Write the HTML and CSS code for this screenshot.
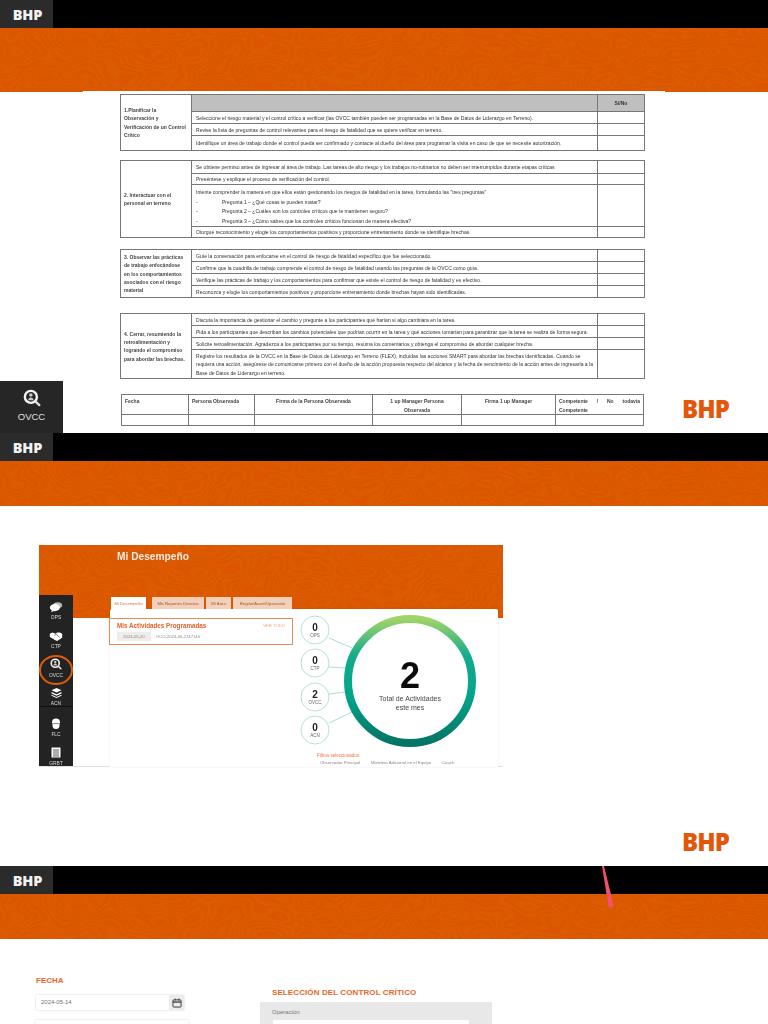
FILE: index.html
```html
<!DOCTYPE html>
<html lang="es">
<head>
  <meta charset="UTF-8">
  <meta name="viewport" content="width=device-width, initial-scale=1.0">
  <title>OVCC - Observación y Verificación de un Control Crítico</title>
  <link rel="stylesheet" href="styles.css">
</head>
<body>
  <!-- shared defs: banner texture and icons -->
  <svg class="defs" width="0" height="0" aria-hidden="true">
    <defs>
      <filter id="topo" x="0" y="0" width="100%" height="100%">
        <feTurbulence type="fractalNoise" baseFrequency="0.016 0.03" numOctaves="2" seed="11"/>
        <feColorMatrix type="matrix" values="0 0 0 0 0.62  0 0 0 0 0.2  0 0 0 0 0  1.6 0 0 0 -0.3"/>
        <feComponentTransfer>
          <feFuncA type="discrete" tableValues="0 .15 0 .15 0 .15 0 .15 0 .15 0 .15 0 .15 0 .15 0 .15 0 .15 0"/>
        </feComponentTransfer>
        <feGaussianBlur stdDeviation="0.5"/>
      </filter>
      <symbol id="ico-ovcc" viewBox="0 0 24 24">
        <circle cx="10.5" cy="10.5" r="8" fill="none" stroke="#f4f4f4" stroke-width="3.2"/>
        <circle cx="10.5" cy="8" r="2.400" fill="#c9c9c9"/>
        <path d="M6.800 15c.4-2.800 1.800-3.800 3.700-3.800s3.300 1 3.700 3.800z" fill="#c9c9c9"/>
        <path d="M16.800 16.800l5 4.700" stroke="#e8e0d4" stroke-width="3" stroke-linecap="round"/>
      </symbol>
    </defs>
  </svg>

  <section class="slide">
    <header class="topbar"><div class="logo-box">BHP</div></header>
    <div class="banner banner-tall"><svg class="topo"><rect width="100%" height="100%" filter="url(#topo)"/></svg></div>

    <div class="doc">
      <table class="check check-1">
        <tr class="head">
          <th rowspan="4" class="step">1.Planificar la<br>Observación y<br>Verificación de un Control<br>Crítico</th>
          <td class="grey"></td><td class="grey yesno">Sí/No</td>
        </tr>
        <tr class="r12"><td>Seleccione el riesgo material y el control crítico a verificar (las OVCC también pueden ser programadas en la Base de Datos de Liderazgo en Terreno).</td><td></td></tr>
        <tr class="r12"><td>Revise la lista de preguntas de control relevantes para el riesgo de fatalidad que se quiere verificar en terreno.</td><td></td></tr>
        <tr class="r15"><td>Identifique un área de trabajo donde el control pueda ser confirmado y contacte al dueño del área para programar la visita en caso de que se necesite autorización.</td><td></td></tr>
      </table>

      <table class="check check-2">
        <tr class="r13">
          <th rowspan="4" class="step">2. Interactuar con el<br>personal en terreno</th>
          <td>Se obtiene permiso antes de ingresar al área de trabajo. Las tareas de alto riesgo y los trabajos no-rutinarios no deben ser interrumpidos durante etapas críticas</td><td></td>
        </tr>
        <tr class="r11"><td>Preséntese y explique el proceso de verificación del control.</td><td></td></tr>
        <tr class="r42">
          <td class="questions">
            <p>Intente comprender la manera en que ellos están gestionando los riesgos de fatalidad en la tarea, formulando las "tres preguntas"</p>
            <p class="ask"><span>-</span>Pregunta 1 – ¿Qué cosas te pueden matar?</p>
            <p class="ask"><span>-</span>Pregunta 2 – ¿Cuáles son los controles críticos que te mantienen seguro?</p>
            <p class="ask"><span>-</span>Pregunta 3 – ¿Cómo sabes que los controles críticos funcionan de manera efectiva?</p>
          </td><td></td>
        </tr>
        <tr class="r11"><td>Otorgue reconocimiento y elogie los comportamientos positivos y proporcione entrenamiento donde se identifique brechas.</td><td></td></tr>
      </table>

      <table class="check check-3">
        <tr class="r12">
          <th rowspan="4" class="step">3. Observar las prácticas<br>de trabajo enfocándose<br>en los comportamientos<br>asociados con el riesgo<br>material</th>
          <td>Guíe la conversación para enfocarse en el control de riesgo de fatalidad específico que fue seleccionado.</td><td></td>
        </tr>
        <tr class="r12"><td>Confirme que la cuadrilla de trabajo comprende el control de riesgo de fatalidad usando las preguntas de la OVCC como guía.</td><td></td></tr>
        <tr class="r12"><td>Verifique las prácticas de trabajo y los comportamientos para confirmar que existe el control de riesgo de fatalidad y es efectivo.</td><td></td></tr>
        <tr class="r12"><td>Reconozca y elogie los comportamientos positivos y proporcione entrenamiento donde brechas hayan sido identificadas.</td><td></td></tr>
      </table>

      <table class="check check-4">
        <tr class="r12">
          <th rowspan="4" class="step">4. Cerrar, resumiendo la<br>retroalimentación y<br>logrando el compromiso<br>para abordar las brechas.</th>
          <td>Discuta la importancia de gestionar el cambio y pregunte a los participantes qué harían si algo cambiara en la tarea.</td><td></td>
        </tr>
        <tr class="r12"><td>Pida a los participantes que describan los cambios potenciales que podrían ocurrir en la tarea y qué acciones tomarían para garantizar que la tarea se realiza de forma segura.</td><td></td></tr>
        <tr class="r12"><td>Solicite retroalimentación. Agradezca a los participantes por su tiempo, resuma los comentarios y obtenga el compromiso de abordar cualquier brecha.</td><td></td></tr>
        <tr class="r29"><td class="tall">Registre los resultados de la OVCC en la Base de Datos de Liderazgo en Terreno (FLEX), incluidas las acciones SMART para abordar las brechas identificadas. Cuando se<br>requiera una acción, asegúrese de comunicarse primero con el dueño de la acción propuesta respecto del alcance y la fecha de vencimiento de la acción antes de ingresarla a la<br>Base de Datos de Liderazgo en terreno.</td><td></td></tr>
      </table>

      <table class="sign">
        <tr class="sign-head">
          <th class="left">Fecha</th>
          <th class="left">Persona Observada</th>
          <th>Firma de la Persona Observada</th>
          <th>1 up Manager Persona Observada</th>
          <th>Firma 1 up Manager</th>
          <th class="left spread">Competente / No todavía Competente</th>
        </tr>
        <tr class="sign-row"><td></td><td></td><td></td><td></td><td></td><td></td></tr>
      </table>
    </div>

    <div class="tool-badge">
      <svg width="18" height="18"><use href="#ico-ovcc"/></svg>
      <span>OVCC</span>
    </div>
    <div class="brand">BHP</div>
  </section>

  <section class="slide">
    <header class="topbar"><div class="logo-box">BHP</div></header>
    <div class="banner"><svg class="topo"><rect width="100%" height="100%" filter="url(#topo)"/></svg></div>

    <div class="app">
      <div class="app-band"><svg class="topo"><rect width="100%" height="100%" filter="url(#topo)"/></svg></div>
      <nav class="side">
        <div class="side-item side-item-first">
          <svg viewBox="0 0 24 18" width="14" height="10"><ellipse cx="15" cy="6" rx="8" ry="5.500" fill="#bbb"/><ellipse cx="10" cy="10" rx="9" ry="6.500" fill="#fff"/><path d="M5 14l-2 4 6-2z" fill="#fff"/></svg>
          <span>OPS</span>
        </div>
        <div class="side-item">
          <svg viewBox="0 0 24 16" width="14" height="9"><path d="M1 3l5-2 5 2 3-2 5 0 4 2v7l-9 6-4-2-5-3-4-2z" fill="#fff"/><path d="M9 6l4-2 5 6" stroke="#222" fill="none"/></svg>
          <span>CTP</span>
        </div>
        <div class="side-item">
          <svg width="12" height="12"><use href="#ico-ovcc"/></svg>
          <span>OVCC</span>
        </div>
        <div class="side-item side-item-rule">
          <svg viewBox="0 0 24 22" width="11" height="10"><path d="M12 0l11 5-11 5L1 5z M1 9l11 5 11-5v3l-11 5-11-5z M1 15l11 5 11-5v2l-11 5-11-5z" fill="#fff"/></svg>
          <span>ACN</span>
        </div>
        <div class="side-item side-item-after">
          <svg viewBox="0 0 20 24" width="10" height="12"><path d="M2 11a8 8 0 0 1 16 0v2H2z M3 14h14v3a7 7 0 0 1-14 0z" fill="#fff"/></svg>
          <span>FLC</span>
        </div>
        <div class="side-item">
          <svg viewBox="0 0 20 22" width="10" height="11"><path d="M1 1h18v20H1z" fill="#fff"/><path d="M4 6h12M4 10h12M4 14h12M4 18h12" stroke="#222" stroke-width="1.500"/></svg>
          <span>GRBT</span>
        </div>
      </nav>
      <svg class="focus-ring" width="38" height="34"><ellipse cx="19" cy="17" rx="16" ry="14" fill="none" stroke="#e05a0c" stroke-width="2"/></svg>

      <div class="app-main">
        <h2 class="app-title">Mi Desempeño</h2>
        <div class="tabs">
          <div class="tab tab-on">Mi Desempeño</div>
          <div class="tab tab-w1">Mis Reportes Directos</div>
          <div class="tab tab-w2">Mi Área</div>
          <div class="tab tab-w3">Región/Asset/Operación</div>
        </div>
        <div class="panel">
          <div class="activities">
            <div class="act-head">
              <h3>Mis Actividades Programadas</h3>
              <span>VER TODO</span>
            </div>
            <div class="act-row">
              <span class="chip">2024-05-20</span>
              <span>OCO-2024-05-2747140</span>
            </div>
          </div>
          <svg class="donut" width="200" height="158" viewBox="0 0 200 158">
            <defs>
              <linearGradient id="ring" x1="0" y1="0" x2="0" y2="1">
                <stop offset="0" stop-color="#9fd468"/>
                <stop offset="0.3" stop-color="#12ab8c"/>
                <stop offset="0.62" stop-color="#02a58a"/>
                <stop offset="1" stop-color="#037564"/>
              </linearGradient>
            </defs>
            <g stroke="#a5e0d6" stroke-width="1" fill="none">
              <path d="M31 29L54 39M31 58L47 59M31 85L47 83M31 114L54 103"/>
            </g>
            <circle cx="112" cy="72" r="62" fill="#fff" stroke="url(#ring)" stroke-width="8"/>
            <g fill="#fff" stroke="#b5e3d8" stroke-width="1">
              <circle cx="17" cy="21" r="14"/>
              <circle cx="17" cy="54" r="14"/>
              <circle cx="17" cy="88" r="14"/>
              <circle cx="17" cy="121" r="14"/>
            </g>
            <g class="mini-num" text-anchor="middle">
              <text x="17" y="22">0</text>
              <text x="17" y="55">0</text>
              <text x="17" y="89">2</text>
              <text x="17" y="122">0</text>
            </g>
            <g class="mini-lab" text-anchor="middle">
              <text x="17" y="28">OPS</text>
              <text x="17" y="61">CTP</text>
              <text x="17" y="95">OVCC</text>
              <text x="17" y="128">ACN</text>
            </g>
            <text class="big-num" x="112" y="79" text-anchor="middle">2</text>
            <text class="big-lab" x="112" y="92" text-anchor="middle">Total de Actividades</text>
            <text class="big-lab" x="112" y="101" text-anchor="middle">este mes</text>
            <text class="filter-lab" x="19" y="148">Filtros seleccionados:</text>
            <text class="filter-chip" x="22" y="155">Observador Principal</text>
            <text class="filter-chip" x="73" y="155">Miembro Adicional en el Equipo</text>
            <text class="filter-chip" x="144" y="155">Coach</text>
          </svg>
        </div>
      </div>
    </div>
    <div class="brand">BHP</div>
  </section>

  <section class="slide slide-last">
    <header class="topbar"><div class="logo-box">BHP</div></header>
    <div class="banner"><svg class="topo"><rect width="100%" height="100%" filter="url(#topo)"/></svg></div>

    <div class="form-wrap">
      <div class="form-date">
        <h4>FECHA</h4>
        <div class="date-input">
          <span>2024-05-14</span>
          <div class="cal">
            <svg viewBox="0 0 16 16" width="10" height="10"><rect x="1.500" y="3" width="13" height="11.500" rx="1.500" fill="none" stroke="#333" stroke-width="1.500"/><path d="M1.500 6.500h13" stroke="#333" stroke-width="2"/><path d="M5 1v3M11 1v3" stroke="#333" stroke-width="1.500"/></svg>
          </div>
        </div>
        <div class="date-pop"></div>
      </div>
      <div class="form-control">
        <h4>SELECCIÓN DEL CONTROL CRÍTICO</h4>
        <div class="grey-panel">
          <label>Operación</label>
          <div class="select"></div>
        </div>
      </div>
    </div>

    <svg class="pen" width="16" height="44" viewBox="0 0 16 44"><path d="M1 0L3 0L12.500 39a2.600 2.600 0 0 1-5 1z" fill="#f3506a"/></svg>
  </section>
</body>
</html>
```

FILE: styles.css
```css
html, body {
  margin: 0;
  height: 1024px;
  overflow: hidden;
  background-color: #fff;
}
body {
  font-family: "Liberation Sans", Arial, sans-serif;
  color: #333;
}
.defs {
  display: block;
  height: 0;
}
.slide {
  position: relative;
  height: 433px;
  overflow: hidden;
  background-color: #fff;
}
.slide-last {
  height: 158px;
}

/* top bars */
.topbar {
  height: 28px;
  background-color: #000;
}
.logo-box {
  display: flex;
  align-items: center;
  justify-content: center;
  box-sizing: border-box;
  width: 53px;
  height: 28px;
  padding-left: 2px;
  background-color: #2b2b2b;
  color: #f2f2f2;
  font-family: "Open Sans", "Liberation Sans", sans-serif;
  font-size: 14.500px;
  font-weight: 800;
  letter-spacing: -0.2px;
}
.banner {
  position: relative;
  height: 45px;
  background-color: #dc5500;
}
.banner-tall {
  height: 64px;
}
.topo {
  display: block;
  width: 100%;
  height: 100%;
}
.brand {
  position: absolute;
  right: 39px;
  bottom: 14px;
  color: #e4570b;
  font-family: "Open Sans", "Liberation Sans", sans-serif;
  font-size: 24px;
  line-height: 20px;
  font-weight: 800;
  letter-spacing: -0.9px;
}

/* first slide: scanned checklist */
.doc {
  position: relative;
  margin: -1px 103px 0 83px;
  padding: 3px 0 0 37px;
  height: 341px;
  background-color: #fff;
  filter: blur(0.3px);
}
.check, .sign {
  width: 525px;
  border-collapse: collapse;
  table-layout: fixed;
  font-size: 5.050px;
  color: #333;
}
.check {
  border: 1px solid #777;
}
.check td, .check th, .sign td, .sign th {
  box-sizing: border-box;
  border: 1px solid #777;
  padding: 0 4px;
  vertical-align: middle;
  white-space: nowrap;
}
.check td:nth-last-child(1) {
  width: 47px;
}
.check .step {
  width: 71px;
  padding: 0 3px;
  text-align: left;
  font-size: 5px;
  line-height: 8.300px;
  color: #444;
}
.check td p {
  margin: 0;
  line-height: 9.600px;
}
.check .questions {
  padding-top: 3px;
  vertical-align: top;
}
.ask span {
  display: inline-block;
  width: 26px;
}
.check .tall {
  line-height: 8.500px;
}
.grey {
  background-color: #bfbfbf;
}
.yesno {
  text-align: center;
  font-weight: bold;
}
.head { height: 17px; }
.r11 { height: 11px; }
.r12 { height: 12px; }
.r13 { height: 13px; }
.r15 { height: 15px; }
.r29 { height: 29px; }
.r42 { height: 42px; }
.check-1 { margin-bottom: 9px; }
.check-2 { margin-bottom: 11px; }
.check-3 { margin-bottom: 15px; }
.check-4 { margin-bottom: 15px; }
.sign {
  margin-left: 1px;
  width: 523px;
}
.sign th {
  font-size: 5px;
  line-height: 8.300px;
  padding: 2px 3px 0;
  color: #444;
  vertical-align: top;
  white-space: normal;
}
.sign th:nth-child(1) { width: 67px; }
.sign th:nth-child(2) { width: 66px; }
.sign th:nth-child(3) { width: 118px; }
.sign th:nth-child(4) { width: 89px; }
.sign th:nth-child(5) { width: 94px; }
.sign th:nth-child(4) { padding: 2px 16px 0; }
.sign .left { text-align: left; }
.sign .spread { text-align: justify; }
.sign-head { height: 18px; }
.sign-row { height: 11px; }
.tool-badge {
  position: absolute;
  left: 0;
  bottom: 0;
  display: flex;
  flex-direction: column;
  align-items: center;
  gap: 4px;
  box-sizing: border-box;
  width: 63px;
  height: 52px;
  padding-top: 8px;
  background-color: #262626;
  color: #e0e0e0;
  font-size: 9.500px;
}

/* second slide: app screenshot */
.app {
  position: relative;
  display: flex;
  width: 464px;
  height: 222px;
  margin: 39px 0 0 39px;
  border-bottom: 1px solid #e2e2e2;
  box-sizing: border-box;
  filter: blur(0.3px);
}
.app-band {
  position: absolute;
  top: 0;
  left: 0;
  right: 0;
  height: 73px;
  background-color: #dc5500;
}
.side {
  position: relative;
  width: 34px;
  height: 171px;
  margin-top: 50px;
  overflow: hidden;
  background-color: #232323;
}
.side-item {
  display: flex;
  flex-direction: column;
  align-items: center;
  justify-content: flex-end;
  gap: 3px;
  box-sizing: border-box;
  height: 29px;
  color: #ddd;
  font-size: 4.900px;
}
.side-item-first { height: 25px; }
.side-item-rule {
  height: 28px;
  padding-bottom: 0;
}
.side-item-after {
  height: 31px;
  border-top: 1px solid #111;
}
.focus-ring {
  position: absolute;
  top: 108px;
  left: -2px;
}
.app-main {
  position: relative;
  margin-left: 37px;
  width: 390px;
}
.app-title {
  margin: 5px 0 0 7px;
  height: 47px;
  color: #f5ebe2;
  font-size: 10.200px;
  line-height: 14px;
  font-weight: bold;
}
.tabs {
  display: flex;
  gap: 2px;
  height: 12px;
  margin-left: 1px;
  font-size: 4.200px;
  line-height: 13px;
  text-align: center;
  color: #8a5a3c;
}
.tab {
  background-color: #f5cfb7;
}
.tab-on {
  width: 35px;
  margin-right: 4px;
  background-color: #fff;
  color: #e2733a;
}
.tab-w1 { width: 52px; }
.tab-w2 { width: 25px; }
.tab-w3 { width: 59px; }
.panel {
  display: flex;
  width: 388px;
  height: 158px;
  background-color: #fff;
  border-radius: 2px 2px 0 0;
  box-shadow: 0 0 3px rgba(0, 0, 0, 0.08);
}
.activities {
  box-sizing: border-box;
  flex: none;
  width: 184px;
  height: 27px;
  margin: 9px 0 0 -1px;
  padding: 2px 7px 0 7px;
  border: 1px solid #ea8a55;
  background-color: #fff;
}
.act-head {
  display: flex;
  justify-content: space-between;
  align-items: center;
}
.act-head h3 {
  margin: 0;
  font-size: 6.300px;
  line-height: 9px;
  font-weight: bold;
  color: #e0622a;
}
.act-head span {
  font-size: 4.200px;
  color: #e9a67f;
}
.act-row {
  display: flex;
  align-items: center;
  gap: 5px;
  margin-top: 2px;
  font-size: 4.200px;
  color: #8a8a8a;
}
.chip {
  display: block;
  width: 34px;
  height: 9px;
  line-height: 9px;
  text-align: center;
  background-color: #efedeb;
}
.donut {
  flex: none;
  margin-left: 5px;
}
.mini-num { font-size: 10px; font-weight: bold; fill: #222; }
.mini-lab { font-size: 4.500px; fill: #666; }
.big-num { font-size: 36px; font-weight: bold; fill: #0c0c0c; }
.big-lab { font-size: 7px; fill: #444; }
.filter-lab { font-size: 4.500px; fill: #e4773f; }
.filter-chip { font-size: 4.300px; fill: #888; }

/* third slide: form */
.form-wrap {
  display: flex;
  align-items: flex-start;
  padding: 37px 0 0 36px;
}
.form-date {
  width: 152px;
}
.form-wrap h4 {
  margin: 0;
  color: #e4692a;
  font-size: 8px;
  line-height: 10px;
  font-weight: bold;
}
.date-input {
  display: flex;
  justify-content: space-between;
  width: 148px;
  height: 15px;
  margin-top: 9px;
  background-color: #fff;
  box-shadow: 0 0 2px rgba(0, 0, 0, 0.18);
  color: #777;
  font-size: 6px;
  line-height: 15px;
}
.date-input span {
  padding-left: 5px;
}
.cal {
  display: flex;
  align-items: center;
  justify-content: center;
  width: 15px;
  background-color: #ececec;
}
.date-pop {
  height: 60px;
  margin-top: 10px;
  background-color: #fff;
  box-shadow: 0 0 2px rgba(0, 0, 0, 0.18);
}
.form-control {
  width: 232px;
  margin: 12px 0 0 72px;
}
.form-control h4 {
  padding-left: 12px;
  font-size: 8px;
  letter-spacing: 0.1px;
}
.grey-panel {
  height: 100px;
  margin-top: 4px;
  padding: 6px 23px 0 13px;
  background-color: #e8e8e8;
}
.grey-panel label {
  display: block;
  margin-left: -1px;
  color: #777;
  font-size: 6px;
  line-height: 8px;
}
.select {
  height: 20px;
  margin-top: 4px;
  background-color: #fff;
}
.pen {
  position: absolute;
  top: 0;
  left: 601px;
}
```
